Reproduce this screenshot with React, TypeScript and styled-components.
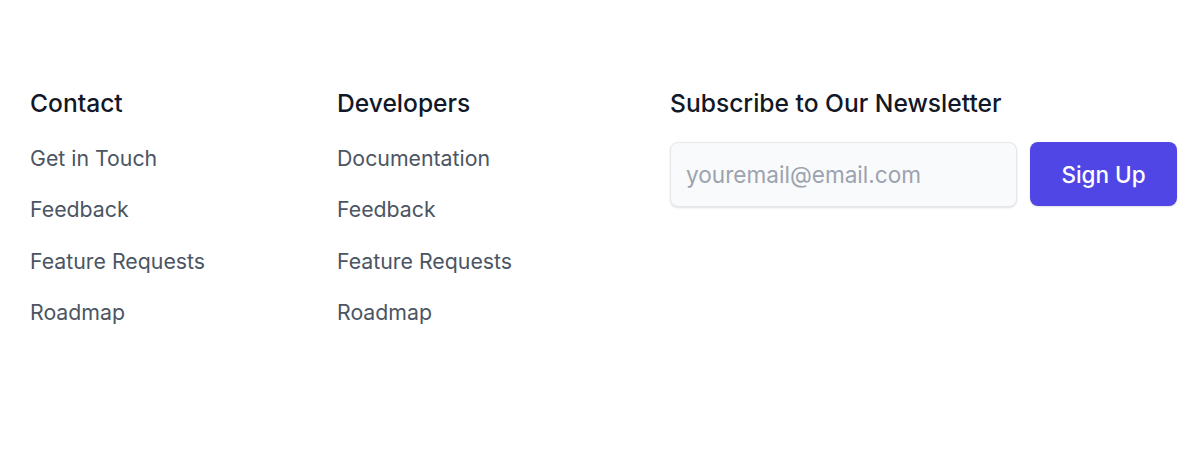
import React from "react";
import styled, { createGlobalStyle } from "styled-components";

const Global = createGlobalStyle`
  html, body { margin: 0; padding: 0; background: #ffffff; }
  body { font-family: Inter, "Noto Sans", Arial, sans-serif; }
  * { box-sizing: border-box; }
`;

const Footer = styled.footer`
  display: grid;
  grid-template-columns: 307px 333px 1fr;
  padding: 87px 23px 0 30px;
  height: 469px;
`;

const Column = styled.div`
  display: flex;
  flex-direction: column;
`;

const Heading = styled.h3`
  margin: 0;
  font-size: 24.6px;
  line-height: 33px;
  font-weight: 500;
  color: #111827;
`;

const LinkList = styled.ul`
  list-style: none;
  margin: 24px 0 0;
  padding: 0;
  display: flex;
  flex-direction: column;
  gap: 22px;
`;

const LinkItem = styled.li`
  font-size: 21.3px;
  line-height: 29.4px;
  color: #4b5563;
`;

const Form = styled.form`
  display: flex;
  gap: 13px;
  margin-top: 22px;
`;

const Input = styled.input`
  width: 347px;
  height: 65px;
  padding: 0 15px;
  font-family: inherit;
  font-size: 22.6px;
  color: #111827;
  background: #f9fafb;
  border: 1px solid #e5e7eb;
  border-radius: 8px;
  box-shadow: 0 1px 2px rgba(0, 0, 0, 0.12);
  outline: none;
  &::placeholder { color: #9ca3af; }
`;

const Button = styled.button`
  width: 147px;
  height: 64px;
  font-family: inherit;
  font-size: 22.5px;
  font-weight: 500;
  color: #ffffff;
  background: #4f46e5;
  border: none;
  border-radius: 8px;
  box-shadow: 0 1px 2px rgba(0, 0, 0, 0.12);
  cursor: pointer;
`;

const linkColumns = [
  { title: "Contact", links: ["Get in Touch", "Feedback", "Feature Requests", "Roadmap"] },
  { title: "Developers", links: ["Documentation", "Feedback", "Feature Requests", "Roadmap"] },
];

export default function App() {
  return (
    <>
      <Global />
      <Footer>
        {linkColumns.map((c) => (
          <Column key={c.title}>
            <Heading>{c.title}</Heading>
            <LinkList>
              {c.links.map((l) => (
                <LinkItem key={l}>{l}</LinkItem>
              ))}
            </LinkList>
          </Column>
        ))}
        <Column>
          <Heading>Subscribe to Our Newsletter</Heading>
          <Form onSubmit={(e) => e.preventDefault()}>
            <Input type="email" placeholder="youremail@email.com" />
            <Button type="submit">Sign Up</Button>
          </Form>
        </Column>
      </Footer>
    </>
  );
}
